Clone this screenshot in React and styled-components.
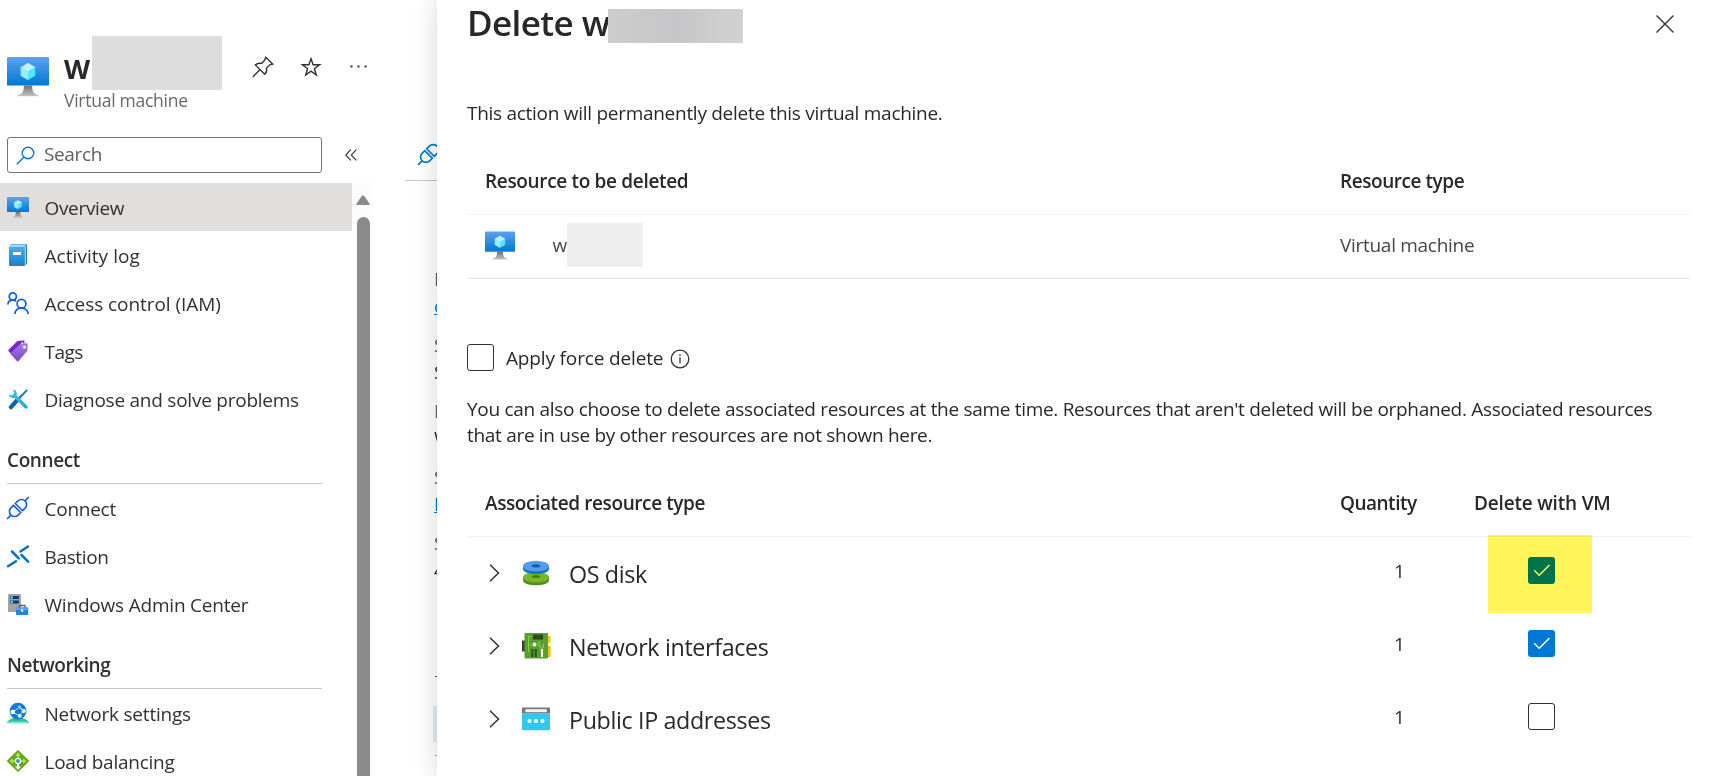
import React, { useState } from 'react';
import styled, { createGlobalStyle, css } from 'styled-components';

const menuItems = [
  { icon: VmIcon, label: 'Overview', spacing: -0.33, selected: true },
  { icon: LogIcon, label: 'Activity log', spacing: 0.05 },
  { icon: PeopleIcon, label: 'Access control (IAM)', spacing: -0.06 },
  { icon: TagIcon, label: 'Tags', spacing: -0.5 },
  { icon: ToolsIcon, label: 'Diagnose and solve problems', spacing: -0.24 },
];

const menuGroups = [
  {
    title: 'Connect',
    items: [
      { icon: PlugIcon, label: 'Connect' },
      { icon: BastionIcon, label: 'Bastion', spacing: -0.35 },
      { icon: AdminIcon, label: 'Windows Admin Center', spacing: -0.2 },
    ],
  },
  {
    title: 'Networking',
    items: [
      { icon: NetworkIcon, label: 'Network settings', spacing: -0.2 },
      { icon: BalancerIcon, label: 'Load balancing' },
    ],
  },
];

const essentials = [
  ['R', 'c', true],
  ['S', 'S', false],
  ['L', 'W', false],
  ['S', 'P', true],
  ['S', '4', false],
];

const associated = [
  { name: 'OS disk', icon: DiskIcon, quantity: 1, highlight: true },
  { name: 'Network interfaces', icon: NicIcon, quantity: 1 },
  { name: 'Public IP addresses', icon: IpIcon, quantity: 1 },
];

export default function App() {
  const [force, setForce] = useState(false);
  const [checked, setChecked] = useState([true, true, false]);

  const onToggle = index => {
    setChecked(checked.map((value, i) => (i === index ? !value : value)));
  };

  return (
    <Portal>
      <GlobalStyle />
      <Sidebar>
        <ResourceHeader>
          <VmIcon size={42} />
          <ResourceTitle>
            <ResourceName>
              <NameText>W</NameText>
              <Redacted $width={130} $height={54} $tone="#dddddd" />
            </ResourceName>
            <ResourceKind>Virtual machine</ResourceKind>
          </ResourceTitle>
          <HeaderActions>
            <PinIcon />
            <StarIcon />
            <MoreIcon />
          </HeaderActions>
        </ResourceHeader>
        <SearchRow>
          <SearchBox>
            <SearchIcon />
            <SearchInput placeholder="Search" />
          </SearchBox>
          <CollapseIcon />
        </SearchRow>
        <MenuArea>
          <Menu>
            {menuItems.map(item => (
              <MenuRow key={item.label} item={item} />
            ))}
            {menuGroups.map(group => (
              <React.Fragment key={group.title}>
                <GroupTitle>{group.title}</GroupTitle>
                {group.items.map(item => (
                  <MenuRow key={item.label} item={item} />
                ))}
              </React.Fragment>
            ))}
          </Menu>
          <ScrollTrack>
            <ScrollArrow viewBox="0 0 14 10">
              <path d="M5.6 1.2a1.8 1.8 0 0 1 2.8 0l5 7.2c.5.8.2 1.6-.6 1.6H1.2C.4 10 .1 9.2.6 8.4z" />
            </ScrollArrow>
            <ScrollThumb />
          </ScrollTrack>
        </MenuArea>
      </Sidebar>

      <PageBehind>
        <CommandBar>
          <PlugIcon size={23} color="#0078d4" />
        </CommandBar>
        <Essentials>
          {essentials.map(([label, value, link], i) => (
            <li key={i}>
              <EssentialLabel>{label}</EssentialLabel>
              <EssentialValue $link={link}>{value}</EssentialValue>
            </li>
          ))}
        </Essentials>
        <TabRule $color="#484644" />
        <TabEdge />
        <TabRule $color="#a19f9d" />
      </PageBehind>

      <Panel>
        <PanelHeader>
          <PanelTitle>Delete w</PanelTitle>
          <Redacted $width={135} $height={34} $tone="linear-gradient(90deg, #cdcdcd, #c6c6c8 50%, #d2d2d2)" />
          <CloseButton aria-label="Close">
            <svg width="18" height="18" viewBox="0 0 18 18" fill="none" stroke="#323130" strokeWidth="1.4">
              <path d="M.5 .5l17 17M17.5 .5l-17 17" />
            </svg>
          </CloseButton>
        </PanelHeader>

        <Paragraph $top={54.5} $spacing={-0.28}>
          This action will permanently delete this virtual machine.
        </Paragraph>

        <ResourceHead>
          <HeadCell $spacing={-0.33}>Resource to be deleted</HeadCell>
          <HeadCell $spacing={-0.45}>Resource type</HeadCell>
        </ResourceHead>
        <ResourceRow>
          <ResourceCell>
            <VmIcon size={30} />
            <SmallName>w</SmallName>
            <Redacted $width={76} $height={44} $tone="#efeeef" />
          </ResourceCell>
          <div>Virtual machine</div>
        </ResourceRow>

        <ForceRow>
          <CheckBox checked={force} onChange={() => setForce(!force)} />
          <ForceLabel>Apply force delete</ForceLabel>
          <InfoIcon />
        </ForceRow>

        <Paragraph $top={24.5} $spacing={-0.305}>
          You can also choose to delete associated resources at the same time. Resources that aren't deleted will be
          orphaned. Associated resources that are in use by other resources are not shown here.
        </Paragraph>

        <AssociatedHead>
          <HeadCell $spacing={-0.4}>Associated resource type</HeadCell>
          <HeadCell $spacing={-0.5}>Quantity</HeadCell>
          <HeadCell $spacing={-0.18}>Delete with VM</HeadCell>
        </AssociatedHead>
        {associated.map(({ name, icon: Icon, quantity, highlight }, i) => (
          <AssociatedRow key={name}>
            <AssociatedName>
              <ChevronIcon />
              <Icon />
              <span>{name}</span>
            </AssociatedName>
            <QuantityCell>{quantity}</QuantityCell>
            <CheckCell>
              <CheckBox checked={checked[i]} onChange={() => onToggle(i)} />
              {highlight && <Highlight />}
            </CheckCell>
          </AssociatedRow>
        ))}
      </Panel>
    </Portal>
  );
}

function MenuRow({ item }) {
  const Icon = item.icon;
  return (
    <MenuLink $selected={item.selected}>
      <Icon />
      <MenuText $spacing={item.spacing ?? -0.25}>{item.label}</MenuText>
    </MenuLink>
  );
}

function CheckBox({ checked, onChange }) {
  return (
    <Box type="button" role="checkbox" aria-checked={checked} $checked={checked} onClick={onChange}>
      {checked && (
        <svg width="27" height="27" viewBox="0 0 27 27" fill="none" stroke="#fff" strokeWidth="1.5">
          <path d="M6.2 13.2l5 5L21.5 8" />
        </svg>
      )}
    </Box>
  );
}

/* icons */

function VmIcon({ size = 22 }) {
  return (
    <svg width={size} height={size} viewBox="0 0 18 18">
      <defs>
        <linearGradient id="vmScreen" x1="0" y1="0" x2="0" y2="1">
          <stop offset="0" stopColor="#5ea0ef" />
          <stop offset="1" stopColor="#0078d4" />
        </linearGradient>
        <linearGradient id="vmStand" x1="0" y1="0" x2="0" y2="1">
          <stop offset="0" stopColor="#707070" />
          <stop offset="1" stopColor="#c4c4c4" />
        </linearGradient>
      </defs>
      <rect y=".9" width="18" height="12.2" rx=".5" fill="url(#vmScreen)" />
      <path d="M7.2 13.1h3.6c0 2.4.4 3.6 2.6 4.2v.4H4.6v-.4c2.2-.6 2.6-1.8 2.6-4.2z" fill="url(#vmStand)" />
      <path d="M9 3.4l3.100 1.8v3.7L9 10.7 5.9 8.9V5.2z" fill="#50e6ff" />
      <path d="M9 3.4l3.100 1.8L9 7 5.9 5.2z" fill="#c3f1ff" />
      <path d="M9 7v3.7L5.9 8.9V5.2z" fill="#9cebff" />
    </svg>
  );
}

function LogIcon() {
  return (
    <svg width="22" height="22" viewBox="0 0 22 22">
      <defs>
        <linearGradient id="log" x1="0" y1="0" x2="0" y2="1">
          <stop offset="0" stopColor="#4aaee8" />
          <stop offset="1" stopColor="#1b7fd0" />
        </linearGradient>
      </defs>
      <path d="M4 .3h15a1 1 0 0 1 1 1V20l-1.5 1.2V3H3z" fill="#1b7fd0" />
      <path d="M4 .8h14.5v19L17 21V3H3z" fill="#b8dcf2" />
      <path d="M2 2.8h15.8V22H3a1 1 0 0 1-1-1z" fill="url(#log)" />
      <rect x="6" y="8" width="8" height="3" fill="#fff" />
    </svg>
  );
}

function PeopleIcon() {
  return (
    <svg width="22" height="22" viewBox="0 0 22 22" fill="none" stroke="#0f5fe0" strokeWidth="1.7">
      <circle cx="5.8" cy="4.5" r="3.6" />
      <path d="M.8 12.5c.3-2.9 2-4.4 4.8-4.4 1.500 0 2.6.4 3.5 1.2" />
      <circle cx="14.5" cy="11.8" r="4.4" />
      <path d="M7.8 22c.5-3.7 2.8-5.8 6.500-5.8s6.300 2.100 6.900 5.800" />
    </svg>
  );
}

function TagIcon() {
  return (
    <svg width="22" height="22" viewBox="0 0 22 22">
      <defs>
        <linearGradient id="tag" x1="0" y1="0" x2="0" y2="1">
          <stop offset="0" stopColor="#a67bdc" />
          <stop offset="1" stopColor="#7f45c0" />
        </linearGradient>
      </defs>
      <path d="M10.500 1l6-.5c.7 0 1 .4 1 1l-.5 5L5 15 1.700 11.200c-.5-.6-.4-1.100.1-1.700z" fill="#7326d3" />
      <path d="M13.700 3.600l5.800-.3c.8 0 1.300.5 1.200 1.200l-.4 6.300-8.700 10.300c-.5.5-1.100.5-1.600 0l-6.200-6.700c-.5-.6-.5-1 0-1.500z" fill="url(#tag)" />
      <circle cx="17.5" cy="7" r="1.5" fill="#fff" />
      <circle cx="15.3" cy="3.2" r="1" fill="#fff" />
    </svg>
  );
}

function ToolsIcon() {
  return (
    <svg width="22" height="22" viewBox="0 0 22 22">
      <defs>
        <linearGradient id="wrench" x1="0" y1="0" x2="1" y2="1">
          <stop offset="0" stopColor="#32c5ea" />
          <stop offset="1" stopColor="#1ca9dc" />
        </linearGradient>
      </defs>
      <path d="M19.500 1.200l1.300 1.200-9.300 10.300-1.800-1.700z" fill="#1580b8" />
      <path d="M8.600 10.800l3 2.900-6.500 7.200c-.7.7-1.600.6-2.200 0l-.8-.8c-.6-.7-.6-1.500.1-2.200z" fill="#0764a5" />
      <path d="M2 6.200l3 1.200 2.300-2.300-1-3.200C8.500 1.500 10.800 4.400 9.600 7.300l10.600 10.500c1.600 1.700-.9 4-2.500 2.500L7.300 9.700C4.600 10.700 1.700 8.900 2 6.200z" fill="url(#wrench)" />
    </svg>
  );
}

function PlugIcon({ size = 22, color = '#0f5fe0' }) {
  return (
    <svg width={size} height={size} viewBox="0 0 22 22" fill="none" stroke={color} strokeWidth="1.6">
      <g transform="rotate(-45 11 11)">
        <path d="M-4.500 11H1M21 11h5.500" />
        <path d="M9.700 5.900v10.200H6.100a5.100 5.100 0 0 1 0-10.200zM12.300 5.900v10.200h3.600a5.100 5.100 0 0 0 0-10.200z" />
      </g>
    </svg>
  );
}

function BastionIcon() {
  return (
    <svg width="22" height="22" viewBox="0 0 22 22" fill="none" stroke="#0072c9" strokeWidth="2.5" strokeLinecap="round">
      <path d="M1 21.200l8-5M13.500 6.500L21 1.500" />
      <path d="M5 6.500l6.800 6.800M14.500 10l6.700 6.700" />
    </svg>
  );
}

function AdminIcon() {
  return (
    <svg width="22" height="22" viewBox="0 0 22 22">
      <path d="M1 2a1 1 0 0 1 1-1h11a1 1 0 0 1 1 1v17H2a1 1 0 0 1-1-1z" fill="#a3a3a3" />
      <rect x="3" y="3" width="9" height="3" rx="1" fill="#0b3a66" />
      <rect x="3" y="7.5" width="9" height="3" rx="1" fill="#0b3a66" />
      <circle cx="4.8" cy="4.5" r="1.2" fill="#50e6ff" />
      <circle cx="4.8" cy="9" r="1.2" fill="#50e6ff" />
      <path d="M12.500 15v-2.500h5.500V15" fill="none" stroke="#5a6470" strokeWidth="1.3" />
      <rect x="9" y="14.5" width="12.2" height="7.5" rx=".8" fill="#2584dc" />
      <path d="M9 14.500h12.200v2.500H9z" fill="#5ea0ef" />
      <rect x="14" y="16.5" width="2.2" height="2" fill="#fff" />
    </svg>
  );
}

function NetworkIcon() {
  return (
    <svg width="23" height="22" viewBox="0 0 23 22">
      <path d="M0 21.500c1-3.500 5-5.500 11.500-5.500S22 18 23 21.500z" fill="#2bbf9f" />
      <path d="M.3 20h22.400l.3 2H0z" fill="#6fe8d4" />
      <circle cx="11.5" cy="9" r="8.8" fill="#0f7ad8" />
      <g stroke="#cfe8fb" strokeWidth="1" fill="none">
        <path d="M6 10l7-5 6 4M6 10l7 4 4-5M13 5l4 4" />
      </g>
      <circle cx="6" cy="10" r="2.400" fill="#fff" />
      <circle cx="13" cy="4.5" r="1.700" fill="#9cc9f5" />
      <circle cx="13.3" cy="14" r="2" fill="#fff" />
      <circle cx="17.5" cy="9" r="2.200" fill="#e2f2ff" />
    </svg>
  );
}

function BalancerIcon() {
  return (
    <svg width="22" height="22" viewBox="0 0 22 22">
      <path d="M10.300.4a1 1 0 0 1 1.400 0l9.900 9.900a1 1 0 0 1 0 1.400l-9.900 9.900a1 1 0 0 1-1.400 0L.4 11.700a1 1 0 0 1 0-1.400z" fill="#62a81d" />
      <path d="M11 2.500l2.800 3.200h-1.900V10h-1.800V5.700H8.200zM2.500 11l3.300-2.700v1.900H9v1.800H5.800v1.800zM19.500 11l-3.300-2.700v1.900H13v1.800h3.200v1.800z" fill="#b4ec36" />
      <path d="M10 13h2v3.500h2L11 20l-3-3.500h2z" fill="#fff" />
      <circle cx="11" cy="11" r="3.200" fill="#fff" />
      <circle cx="11" cy="11" r="2" fill="#3a8fe6" />
    </svg>
  );
}

function DiskIcon() {
  return (
    <svg width="28" height="28" viewBox="0 0 28 28">
      <path d="M1 18.500v2.800c0 3 5.800 5 13 5s13-2 13-5v-2.800z" fill="#56901b" />
      <ellipse cx="14" cy="18.3" rx="13" ry="5.2" fill="#76b82a" />
      <ellipse cx="14" cy="17.5" rx="4.2" ry="1.5" fill="#4c8014" />
      <path d="M1 7.300v2.600c0 3 5.800 5 13 5s13-2 13-5V7.300z" fill="#1975cf" />
      <ellipse cx="14" cy="7" rx="13" ry="5.3" fill="#559cee" />
      <ellipse cx="14" cy="6.8" rx="4.3" ry="1.6" fill="#0a5ca8" />
    </svg>
  );
}

function NicIcon() {
  return (
    <svg width="28" height="28" viewBox="0 0 28 28">
      <rect y="8.5" width="4" height="11" fill="#3c3c41" />
      <rect x="25" y="4" width="3.5" height="7" fill="#ffca00" />
      <rect x="25" y="14" width="3.5" height="11" fill="#ffb900" />
      <rect x="2.5" y="1" width="23.5" height="25.5" rx="1" fill="#5a9e31" />
      <rect x="11" y="2.5" width="10" height="5" fill="#2c4b17" />
      <g stroke="#86d633" strokeWidth="1" fill="none">
        <path d="M9.500 4.500H6.500v8.500h3.500M6.500 13v7M17 9.500v5h2v5M21.500 11.500v5" />
      </g>
      <circle cx="12.6" cy="12.5" r="1.9" fill="#fff" />
      <path d="M9.200 17h2.200v8H9.200zM12.700 17h2.200v8h-2.200z" fill="#2c5a17" />
      <rect x="19" y="17" width="2" height="8" fill="#fff" />
    </svg>
  );
}

function IpIcon() {
  return (
    <svg width="28" height="28" viewBox="0 0 28 28">
      <path d="M0 3.500a1 1 0 0 1 1-1h26a1 1 0 0 1 1 1v5H0z" fill="#767676" />
      <rect x="3.3" y="4.2" width="21.5" height="3" fill="#f2f2f2" />
      <path d="M0 8.300h28v16a1 1 0 0 1-1 1H1a1 1 0 0 1-1-1z" fill="#32c8ec" />
      <g fill="#fff">
        <circle cx="7.6" cy="16" r="2.1" />
        <circle cx="14" cy="16" r="2.1" />
        <circle cx="20.4" cy="16" r="2.1" />
      </g>
    </svg>
  );
}

function PinIcon() {
  return (
    <svg width="22" height="22" viewBox="0 0 22 22" fill="none" stroke="#323130" strokeWidth="1.4">
      <path d="M13.700 1.200l7 6.800-2.700.6-3.500 3.500c.6 2.200.1 4.300-1.700 6.200L3.200 8.900c1.700-1.500 4-2 6.400-1.500l3.300-3.500z" />
      <path d="M7.800 13.800L.8 21" />
    </svg>
  );
}

function StarIcon() {
  return (
    <svg width="20" height="20" viewBox="0 0 20 20" fill="none" stroke="#323130" strokeWidth="1.4">
      <path d="M10 1.800l2.100 6h6.500l-5.200 3.900 1.900 6.300L10 14.200 4.700 18l1.900-6.300L1.400 7.800h6.500z" />
    </svg>
  );
}

function MoreIcon() {
  return (
    <svg width="17" height="3" viewBox="0 0 17 3" fill="#323130">
      <path d="M.5 .5h2v2h-2zM7.500 .5h2v2h-2zM14.500 .5h2v2h-2z" />
    </svg>
  );
}

function SearchIcon() {
  return (
    <svg width="19" height="19" viewBox="0 0 19 19" fill="none" stroke="#0078d4" strokeWidth="1.4">
      <circle cx="12" cy="7" r="5.8" />
      <path d="M7.800 11.200L.8 18.200" />
    </svg>
  );
}

function CollapseIcon() {
  return (
    <svg width="12" height="12" viewBox="0 0 12 12" fill="none" stroke="#323130" strokeWidth="1.1">
      <path d="M5.800.7L.8 6l5 5.300M11.300.7L6.300 6l5 5.300" />
    </svg>
  );
}

function ChevronIcon() {
  return (
    <svg width="11" height="18" viewBox="0 0 11 18" fill="none" stroke="#323130" strokeWidth="1.5">
      <path d="M1 .8L9.500 9 1 17.200" />
    </svg>
  );
}

function InfoIcon() {
  return (
    <svg width="20" height="20" viewBox="0 0 20 20" fill="none" stroke="#323130" strokeWidth="1.3">
      <circle cx="10" cy="10" r="8.8" />
      <path d="M10 8.300v6.200M10 5.300v1.700" />
    </svg>
  );
}

/* styles */

const GlobalStyle = createGlobalStyle`
  * {
    box-sizing: border-box;
  }

  body {
    margin: 0;
    background-color: #fff;
    color: #323130;
    font-family: 'Open Sans', 'Noto Sans', sans-serif;
    font-size: 19px;
    overflow: hidden;
  }

  svg {
    display: block;
    flex: none;
    overflow: visible;
  }
`;

const Portal = styled.div`
  display: flex;
  width: 1712px;
  height: 776px;
  overflow: hidden;
`;

const Sidebar = styled.aside`
  display: flex;
  flex-direction: column;
  flex: none;
  width: 374px;
  height: 100%;
`;

const ResourceHeader = styled.header`
  display: flex;
  align-items: flex-start;
  height: 137px;
  padding: 36px 0 0 7px;

  > svg {
    margin-top: 19px;
  }
`;

const ResourceTitle = styled.div`
  width: 158px;
  margin-left: 15px;
`;

const ResourceName = styled.div`
  display: flex;
  height: 54px;
`;

const NameText = styled.div`
  width: 28px;
  padding-top: 10px;
  line-height: 45px;
  font-size: 27px;
  font-weight: 700;
  color: #292827;
`;

const ResourceKind = styled.div`
  line-height: 20px;
  font-size: 17.5px;
  letter-spacing: -0.26px;
  color: #6b6967;
`;

const Redacted = styled.div`
  flex: none;
  width: ${props => props.$width}px;
  height: ${props => props.$height}px;
  background: ${props => props.$tone};
`;

const HeaderActions = styled.div`
  display: flex;
  align-items: center;
  gap: 27px;
  height: 62px;
  margin-left: 29.5px;

  svg:last-child {
    margin: -2px 0 0 2px;
  }
`;

const SearchRow = styled.div`
  display: flex;
  align-items: center;
  gap: 23px;
  height: 46px;
  padding: 0 0 10px 7px;
`;

const SearchBox = styled.div`
  display: flex;
  align-items: center;
  width: 315px;
  height: 36px;
  padding-left: 8px;
  border: 1px solid #757371;
  border-radius: 3px;
`;

const SearchInput = styled.input`
  flex: 1;
  min-width: 0;
  margin-left: 9px;
  padding: 0 0 2px;
  border: none;
  outline: none;
  background: none;
  font: inherit;
  letter-spacing: -0.36px;

  &::placeholder {
    color: #605e5c;
    opacity: 1;
  }
`;

const MenuArea = styled.div`
  display: flex;
  flex: 1;
  min-height: 0;
`;

const Menu = styled.nav`
  width: 352px;
  overflow: hidden;
`;

const MenuLink = styled.div`
  display: flex;
  align-items: center;
  height: 48px;
  padding-left: 7px;
  cursor: pointer;
  ${props =>
    props.$selected &&
    css`
      background-color: #e1dfdd;
    `}

  svg {
    width: 22px;
  }
`;

const MenuText = styled.span`
  margin-left: 15.5px;
  padding-top: 1px;
  letter-spacing: ${props => props.$spacing}px;
  white-space: nowrap;
`;

const GroupTitle = styled.div`
  width: 315px;
  height: 61px;
  margin: 0 0 0.2px 7px;
  padding-top: 24px;
  line-height: 26px;
  font-weight: 600;
  letter-spacing: -0.4px;
  border-bottom: 1px solid #c8c6c4;
`;

const ScrollTrack = styled.div`
  display: flex;
  flex-direction: column;
  align-items: center;
  width: 22px;
  padding-top: 12px;
  background-color: #fcfcfc;
`;

const ScrollArrow = styled.svg`
  width: 14px;
  height: 10px;
  fill: #8a8a8a;
`;

const ScrollThumb = styled.div`
  flex: 1;
  width: 13px;
  margin: 12px 0 0 1px;
  border-radius: 7px 7px 0 0;
  background-color: #8a8a8a;
`;

const PageBehind = styled.main`
  flex: none;
  width: 63px;
  height: 100%;
  overflow: hidden;
`;

const CommandBar = styled.div`
  height: 181px;
  margin-left: 31px;
  padding: 142px 0 0 13px;
  border-bottom: 1px solid #c8c6c4;
`;

const Essentials = styled.ul`
  margin: 0;
  padding: 85px 0 0 60px;
  height: 495px;
  list-style: none;
  line-height: 27px;

  li {
    height: 66px;
  }
`;

const EssentialLabel = styled.div`
  color: #605e5c;
`;

const EssentialValue = styled.div`
  ${props =>
    props.$link &&
    css`
      color: #0078d4;
      text-decoration: underline;
    `}
`;

const TabRule = styled.div`
  width: 2px;
  height: 1px;
  margin-left: 61px;
  background-color: ${props => props.$color};
`;

const TabEdge = styled.div`
  width: 4px;
  height: 36px;
  margin: 29px 0 13px 59px;
  background-color: #dcecf7;
`;

const Panel = styled.section`
  position: relative;
  flex: 1;
  height: 100%;
  padding: 0 22px 0 30px;
  background-color: #fff;
  color: #292827;
  box-shadow: 0 0 24px rgba(0, 0, 0, 0.16);
`;

const PanelHeader = styled.div`
  display: flex;
  align-items: center;
  height: 45px;

  ${Redacted} {
    margin-top: 7px;
  }
`;

const PanelTitle = styled.h1`
  width: 141px;
  margin: 0;
  line-height: 45px;
  font-size: 35px;
  font-weight: 600;
  letter-spacing: -0.6px;
  white-space: nowrap;
`;

const CloseButton = styled.button`
  margin: 3px 16px 0 auto;
  padding: 0;
  border: none;
  background: none;
  cursor: pointer;
`;

const Paragraph = styled.p`
  margin: ${props => props.$top}px 0 0;
  line-height: 26px;
  letter-spacing: ${props => props.$spacing}px;
`;

const ResourceHead = styled.div`
  display: grid;
  grid-template-columns: 855px auto;
  align-items: center;
  height: 68px;
  margin-top: 21.5px;
  padding-left: 18px;
  border-bottom: 1px solid #f0efee;
`;

const HeadCell = styled.div`
  font-weight: 600;
  letter-spacing: ${props => props.$spacing}px;
`;

const ResourceRow = styled(ResourceHead)`
  height: 64px;
  margin-top: 0;
  padding-bottom: 3px;
  border-color: #e6e5e4;
  color: #484644;
  letter-spacing: -0.29px;
`;

const ResourceCell = styled.div`
  display: flex;
  align-items: center;
`;

const SmallName = styled.span`
  width: 14.5px;
  margin-left: 37.5px;
`;

const ForceRow = styled.div`
  display: flex;
  align-items: center;
  height: 27px;
  margin-top: 65px;

  > svg {
    margin: 3px 0 0 6.5px;
  }
`;

const ForceLabel = styled.span`
  margin-left: 12px;
  letter-spacing: -0.15px;
`;

const Box = styled.button`
  flex: none;
  width: 27px;
  height: 27px;
  padding: 0;
  border: ${props => (props.$checked ? 'none' : '1px solid #323130')};
  border-radius: 3px;
  background-color: ${props => (props.$checked ? '#0078d4' : '#fff')};
  cursor: pointer;
`;

const AssociatedHead = styled(ResourceHead)`
  grid-template-columns: 855px 134px auto;
`;

const AssociatedRow = styled.div`
  display: grid;
  grid-template-columns: 873px 135px auto;
  height: 73px;
`;

const AssociatedName = styled.div`
  display: flex;
  align-items: center;
  padding-left: 22px;
  font-size: 23.3px;
  letter-spacing: -0.36px;

  svg {
    margin-top: -1px;
  }

  svg + svg {
    margin-left: 22px;
  }

  span {
    margin-left: 19px;
  }
`;

const QuantityCell = styled.div`
  padding: 1px 0 5px 54px;
  line-height: 67px;
`;

const CheckCell = styled.div`
  position: relative;
  display: flex;
  align-items: center;
  padding: 0 0 6px 53px;
`;

const Highlight = styled.div`
  position: absolute;
  left: 13px;
  top: -2px;
  width: 104px;
  height: 78px;
  background-color: #fff55a;
  mix-blend-mode: multiply;
  pointer-events: none;
`;
